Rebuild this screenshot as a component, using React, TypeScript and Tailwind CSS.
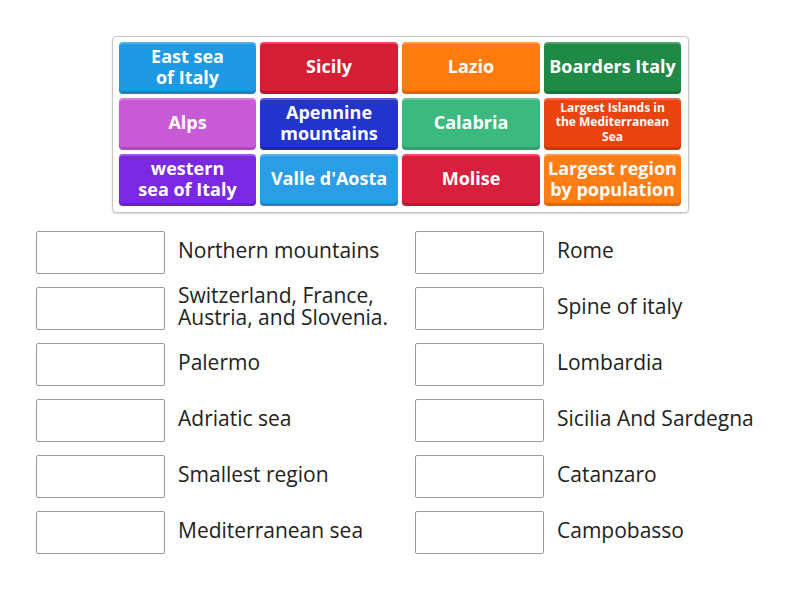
import React from "react";

const tiles: { t: string; bg: string; small?: boolean }[] = [
  { t: "East sea\nof Italy", bg: "bg-[#1f9ae2]" },
  { t: "Sicily", bg: "bg-[#d41e35]" },
  { t: "Lazio", bg: "bg-[#ff7b0d]" },
  { t: "Boarders Italy", bg: "bg-[#1f8a46]" },
  { t: "Alps", bg: "bg-[#c95ad8]" },
  { t: "Apennine\nmountains", bg: "bg-[#2234cc]" },
  { t: "Calabria", bg: "bg-[#3cb97f]" },
  { t: "Largest Islands in\nthe Mediterranean\nSea", bg: "bg-[#e9430f]", small: true },
  { t: "western\nsea of Italy", bg: "bg-[#7a28e2]" },
  { t: "Valle d'Aosta", bg: "bg-[#2b9de7]" },
  { t: "Molise", bg: "bg-[#d81f3d]" },
  { t: "Largest region\nby population", bg: "bg-[#ff7d15]" },
];

const left = [
  "Northern mountains",
  "Switzerland, France,\nAustria, and Slovenia.",
  "Palermo",
  "Adriatic sea",
  "Smallest region",
  "Mediterranean sea",
];
const right = [
  "Rome",
  "Spine of italy",
  "Lombardia",
  "Sicilia And Sardegna",
  "Catanzaro",
  "Campobasso",
];

function Row({ text }: { text: string }) {
  return (
    <div className="flex items-center h-[42px]">
      <div className="w-[129px] h-[43px] border border-[#9a9a9a] rounded-[2px] bg-white shrink-0" />
      <div className="ml-[13px] text-[21px] leading-[22px] text-[#222] whitespace-pre-line -mt-[4px]">
        {text}
      </div>
    </div>
  );
}

export default function App() {
  return (
    <div
      className="w-[800px] h-[600px] bg-white relative"
      style={{ fontFamily: '"Open Sans", "Noto Sans", sans-serif' }}
    >
      <div className="pt-[36px] flex justify-center">
        <div className="ml-[1px] w-[577px] border border-[#c4c4c4] rounded-[4px] shadow-[0_1px_2px_rgba(0,0,0,0.15)] px-[6px] pt-[5px] pb-[6px] grid grid-cols-[137px_138px_138px_137px] gap-x-[4px] gap-y-[4px]">
          {tiles.map((x, i) => (
            <div
              key={i}
              className={`${x.bg} h-[52px] pb-[3px] rounded-[4px] flex items-center justify-center text-center text-white font-bold whitespace-pre-line shadow-[inset_0_2px_0_rgba(255,255,255,0.22),inset_0_-3px_0_rgba(0,0,0,0.15)] ${
                x.small ? "text-[12px] leading-[14.5px]" : "text-[18px] leading-[21px]"
              }`}
            >
              {x.t}
            </div>
          ))}
        </div>
      </div>
      <div className="mt-[18px] pl-[36px] grid grid-cols-[379px_379px] gap-y-[14px]">
        {left.map((l, i) => (
          <React.Fragment key={i}>
            <Row text={l} />
            <Row text={right[i]} />
          </React.Fragment>
        ))}
      </div>
    </div>
  );
}
